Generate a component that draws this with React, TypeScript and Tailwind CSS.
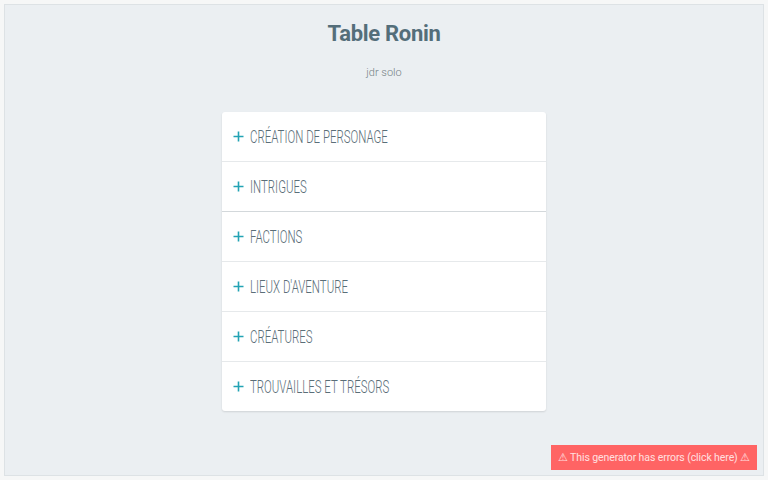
import React from "react";

const items = [
  "CRÉATION DE PERSONAGE",
  "INTRIGUES",
  "FACTIONS",
  "LIEUX D'AVENTURE",
  "CRÉATURES",
  "TROUVAILLES ET TRÉSORS",
];

function Plus() {
  return (
    <svg width="11" height="11" viewBox="0 0 11 11" className="shrink-0">
      <path d="M5.5 0.5V10.5M0.5 5.5H10.5" stroke="#23a3b4" strokeWidth="1.6" />
    </svg>
  );
}

export default function App() {
  return (
    <div className="w-[768px] h-[480px] bg-[#f6f7f7] p-[4px] overflow-hidden">
      <div className="relative h-[472px] border border-[#dde2e5] bg-[#ebeff2] flex flex-col items-center font-['Roboto',sans-serif]">
        <h1 className="mt-[16px] text-[22px] leading-[26px] font-bold text-[#546e7a] tracking-[-0.3px]">Table Ronin</h1>
        <p className="mt-[19px] text-[11px] leading-[13px] font-light text-[#737f85]">jdr solo</p>
        <div className="mt-[33px] w-[324px] bg-white rounded-[3px] shadow-[0_1px_2px_rgba(0,0,0,0.12)]">
          {items.map((t, i) => (
            <div
              key={t}
              className={
                "flex items-center pl-[11px] gap-[6px] " +
                (i === 0 ? "h-[49px]" : i === 2 ? "h-[50px] border-t border-[#d3d8db]" : "h-[50px] border-t border-[#e6e9eb]")
              }
            >
              <Plus />
              <span className="inline-block origin-left scale-x-[0.635] text-[18px] leading-[20px] text-[#5a6e78] font-['Roboto',sans-serif] font-light whitespace-nowrap">
                {t}
              </span>
            </div>
          ))}
        </div>
        <div className="absolute right-[6px] bottom-[5px] w-[206px] h-[25px] bg-[#ff6464] flex items-center justify-center text-[10.5px] tracking-[-0.1px] text-[#ffe0e0] font-['Roboto',sans-serif] whitespace-nowrap">
          ⚠ This generator has errors (click here) ⚠
        </div>
      </div>
    </div>
  );
}
